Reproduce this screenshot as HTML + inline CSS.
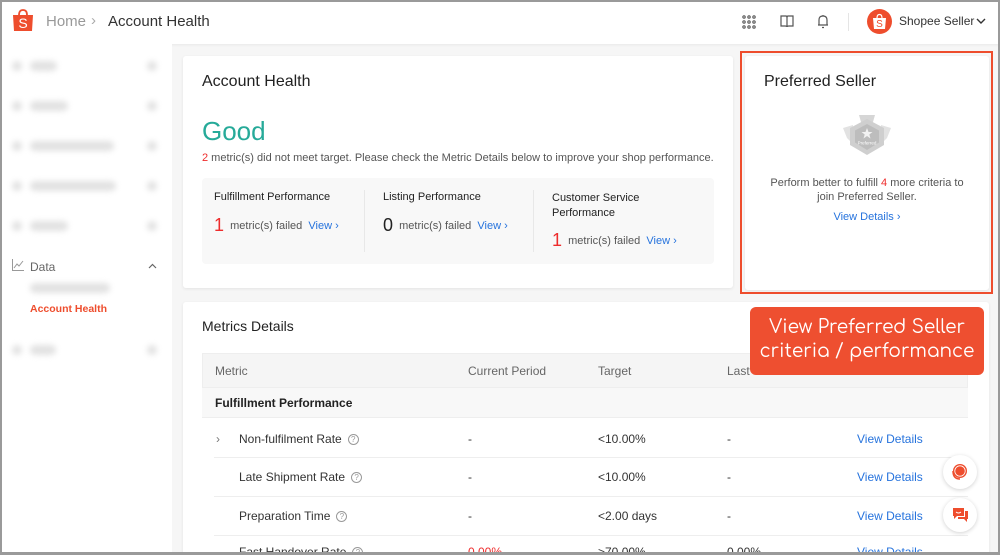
<!DOCTYPE html>
<html><head><meta charset="utf-8">
<style>
*{box-sizing:border-box;margin:0;padding:0}
html,body{width:1000px;height:555px;overflow:hidden}
body{font-family:"Liberation Sans",Arial,sans-serif;background:#f6f6f6;position:relative;color:#333}
.abs{position:absolute}
.frame{position:absolute;left:0;top:0;width:1000px;height:555px;border:2px solid #9a9a9a;border-bottom-width:3px;pointer-events:none;z-index:50}
.hdr{left:0;top:0;width:1000px;height:44px;background:#fff;box-shadow:0 1px 3px rgba(0,0,0,.06)}
.side{left:0;top:44px;width:172px;height:511px;background:#fff}
.blur{position:absolute;height:10px;background:#e2e2e2;border-radius:5px;filter:blur(3px)}
.card{position:absolute;background:#fff;border-radius:3px;box-shadow:0 1px 3px rgba(0,0,0,.08)}
.blue{color:#2673dd}
.red{color:#ee2c2c}
.row{position:absolute;left:202px;width:766px;font-size:12px;color:#333}
.q{display:inline-block;width:11px;height:11px;border:1px solid #999;border-radius:50%;font-size:8px;line-height:9px;text-align:center;color:#999;vertical-align:middle;margin-left:6px}
</style></head><body>
<div class="frame"></div>
<div class="abs hdr">
  <svg class="abs" style="left:12px;top:8px" width="22" height="24" viewBox="0 0 22 24"><path d="M7 7 Q7 2 11 2 Q15 2 15 7" fill="none" stroke="#ee4d2d" stroke-width="1.8"/><path d="M1 7 H21 L20 23 H2 Z" fill="#ee4d2d"/><text x="11" y="20" font-size="14" fill="#fff" text-anchor="middle" font-family="Liberation Sans">S</text></svg>
  <div class="abs" style="left:46px;top:13px;font-size:15px;color:#999">Home</div>
  <div class="abs" style="left:91px;top:12px;font-size:15px;color:#aaa">›</div>
  <div class="abs" style="left:108px;top:13px;font-size:15px;color:#333">Account Health</div>
  <svg class="abs" style="left:742px;top:15px" width="14" height="14" viewBox="0 0 14 14" fill="none" stroke="#555" stroke-width="1.1"><circle cx="2" cy="2" r="1.2"/><circle cx="7" cy="2" r="1.2"/><circle cx="12" cy="2" r="1.2"/><circle cx="2" cy="7" r="1.2"/><circle cx="7" cy="7" r="1.2"/><circle cx="12" cy="7" r="1.2"/><circle cx="2" cy="12" r="1.2"/><circle cx="7" cy="12" r="1.2"/><circle cx="12" cy="12" r="1.2"/></svg>
  <svg class="abs" style="left:780px;top:15px" width="14" height="13" viewBox="0 0 14 13" fill="none" stroke="#555" stroke-width="1.2"><path d="M1 1 H6 Q7 1 7 3 V12 Q7 11 5 11 H1 Z M13 1 H8 Q7 1 7 3 V12 Q7 11 9 11 H13 Z"/></svg>
  <svg class="abs" style="left:817px;top:14px" width="12" height="15" viewBox="0 0 12 15" fill="none" stroke="#555" stroke-width="1.2"><path d="M2 11 V6 Q2 2 6 2 Q10 2 10 6 V11 H1 H11 M5 13.5 H7 M6 1 V2"/></svg>
  <div class="abs" style="left:848px;top:13px;width:1px;height:18px;background:#e5e5e5"></div>
  <div class="abs" style="left:867px;top:9px;width:25px;height:25px;border-radius:50%;background:#ee4d2d"></div>
  <svg class="abs" style="left:872px;top:13px" width="15" height="17" viewBox="0 0 15 17"><path d="M5 5 Q5 1.5 7.5 1.5 Q10 1.5 10 5" fill="none" stroke="#fff" stroke-width="1.2"/><path d="M1 5 H14 L13 16 H2 Z" fill="#fff"/><text x="7.5" y="14" font-size="10" fill="#ee4d2d" text-anchor="middle" font-family="Liberation Sans">S</text></svg>
  <div class="abs" style="left:899px;top:14px;font-size:12px;color:#333">Shopee Seller</div>
  <svg class="abs" style="left:976px;top:18px" width="10" height="7" viewBox="0 0 10 7" fill="none" stroke="#333" stroke-width="1.4"><path d="M1 1 L5 5 L9 1"/></svg>
</div>
<div class="abs side">
  <div class="blur" style="left:12px;top:17px;width:10px"></div><div class="blur" style="left:30px;top:17px;width:27px"></div><div class="blur" style="left:147px;top:17px;width:10px"></div>
  <div class="blur" style="left:12px;top:57px;width:10px"></div><div class="blur" style="left:30px;top:57px;width:38px"></div><div class="blur" style="left:147px;top:57px;width:10px"></div>
  <div class="blur" style="left:12px;top:97px;width:10px"></div><div class="blur" style="left:30px;top:97px;width:84px"></div><div class="blur" style="left:147px;top:97px;width:10px"></div>
  <div class="blur" style="left:12px;top:137px;width:10px"></div><div class="blur" style="left:30px;top:137px;width:86px"></div><div class="blur" style="left:147px;top:137px;width:10px"></div>
  <div class="blur" style="left:12px;top:177px;width:10px"></div><div class="blur" style="left:30px;top:177px;width:38px"></div><div class="blur" style="left:147px;top:177px;width:10px"></div>
  <svg class="abs" style="left:12px;top:215px" width="12" height="12" viewBox="0 0 12 12" fill="none" stroke="#999" stroke-width="1"><path d="M0.5 0 V11.5 H12 M2 9 L5 5 L7 7 L11 2"/></svg>
  <div class="abs" style="left:30px;top:216px;font-size:12px;color:#666">Data</div>
  <svg class="abs" style="left:148px;top:219px" width="9" height="6" viewBox="0 0 9 6" fill="none" stroke="#666" stroke-width="1.2"><path d="M1 5 L4.5 1.5 L8 5"/></svg>
  <div class="blur" style="left:30px;top:239px;width:80px"></div>
  <div class="abs" style="left:30px;top:259px;font-size:10.5px;font-weight:bold;color:#ee4d2d">Account Health</div>
  <div class="blur" style="left:12px;top:301px;width:10px"></div><div class="blur" style="left:30px;top:301px;width:26px"></div><div class="blur" style="left:147px;top:301px;width:10px"></div>
</div>

<div class="card" style="left:183px;top:56px;width:550px;height:232px">
  <div class="abs" style="left:19px;top:17px;font-size:16px;color:#222">Account Health</div>
  <div class="abs" style="left:19px;top:60px;font-size:26px;color:#26aa99">Good</div>
  <div class="abs" style="left:19px;top:96px;font-size:11px;color:#555;white-space:nowrap"><span class="red">2</span> metric(s) did not meet target. Please check the Metric Details below to improve your shop performance.</div>
  <div class="abs" style="left:19px;top:122px;width:512px;height:86px;background:#f8f8f8;border-radius:4px">
    <div class="abs" style="left:12px;top:13px;font-size:11px;color:#222">Fulfillment Performance</div>
    <div class="abs" style="left:12px;top:37px;font-size:11px;color:#555;white-space:nowrap"><span class="red" style="font-size:18px;vertical-align:-2px">1</span>&nbsp;&nbsp;metric(s) failed&nbsp;&nbsp;<span class="blue">View ›</span></div>
    <div class="abs" style="left:162px;top:12px;width:1px;height:62px;background:#e8e8e8"></div>
    <div class="abs" style="left:181px;top:13px;font-size:11px;color:#222">Listing Performance</div>
    <div class="abs" style="left:181px;top:37px;font-size:11px;color:#555;white-space:nowrap"><span style="font-size:18px;color:#222;vertical-align:-2px">0</span>&nbsp;&nbsp;metric(s) failed&nbsp;&nbsp;<span class="blue">View ›</span></div>
    <div class="abs" style="left:331px;top:12px;width:1px;height:62px;background:#e8e8e8"></div>
    <div class="abs" style="left:350px;top:13px;font-size:11px;color:#222;line-height:15px">Customer Service<br>Performance</div>
    <div class="abs" style="left:350px;top:52px;font-size:11px;color:#555;white-space:nowrap"><span class="red" style="font-size:18px;vertical-align:-2px">1</span>&nbsp;&nbsp;metric(s) failed&nbsp;&nbsp;<span class="blue">View ›</span></div>
  </div>
</div>

<div class="card" style="left:745px;top:56px;width:244px;height:234px">
  <div class="abs" style="left:19px;top:17px;font-size:16px;color:#222">Preferred Seller</div>
  <svg class="abs" style="left:96px;top:56px" width="52" height="48" viewBox="0 0 52 48"><path d="M18 3 H34 L32 10 H20 Z" fill="#d6d6d6"/><path d="M2 16 L12 13 L12 32 L6 26 Z M50 16 L40 13 L40 32 L46 26 Z" fill="#e2e2e2"/><path d="M26 7 L43 16 V33 L26 43 L9 33 V16 Z" fill="#cfcfcf"/><path d="M26 12 L38 18.5 V30.5 L26 38 L14 30.5 V18.5 Z" fill="#bdbdbd"/><path d="M26 16 L27.5 20 L31.5 20 L28.3 22.5 L29.5 26.5 L26 24 L22.5 26.5 L23.7 22.5 L20.5 20 L24.5 20 Z" fill="#f2f2f2"/><text x="26" y="32.5" font-size="4.5" fill="#fff" text-anchor="middle" font-family="Liberation Sans">Preferred</text></svg>
  <div class="abs" style="left:0;top:120px;width:244px;text-align:center;font-size:11px;color:#555;line-height:14px">Perform better to fulfill <span class="red">4</span> more criteria to<br>join Preferred Seller.</div>
  <div class="abs blue" style="left:0;top:155px;width:244px;text-align:center;font-size:11px">View Details ›</div>
</div>
<div class="abs" style="left:740px;top:51px;width:253px;height:243px;border:2px solid #ee4d2d"></div>

<div class="card" style="left:183px;top:302px;width:806px;height:253px"></div>
<div class="abs" style="left:202px;top:318px;font-size:14px;color:#222">Metrics Details</div>
<div class="abs" style="left:202px;top:353px;width:766px;height:34px;background:#f5f5f5;border:1px solid #eee;border-bottom:0"></div>
<div class="row" style="top:364px;color:#666"><span class="abs" style="left:13px">Metric</span><span class="abs" style="left:266px">Current Period</span><span class="abs" style="left:396px">Target</span><span class="abs" style="left:525px">Last</span></div>
<div class="abs" style="left:202px;top:387px;width:766px;height:31px;background:#f8f8f8;border-top:1px solid #eee;border-bottom:1px solid #eee"></div>
<div class="row" style="top:396px;font-weight:bold;color:#222"><span class="abs" style="left:13px">Fulfillment Performance</span></div>
<div class="row" style="top:432px"><span class="abs" style="left:14px;color:#777">›</span><span class="abs" style="left:37px;white-space:nowrap">Non-fulfilment Rate<span class="q">?</span></span><span class="abs" style="left:266px">-</span><span class="abs" style="left:396px">&lt;10.00%</span><span class="abs" style="left:525px">-</span><span class="abs blue" style="left:655px">View Details</span></div>
<div class="abs" style="left:214px;top:457px;width:754px;height:1px;background:#eee"></div>
<div class="row" style="top:470px"><span class="abs" style="left:37px;white-space:nowrap">Late Shipment Rate<span class="q">?</span></span><span class="abs" style="left:266px">-</span><span class="abs" style="left:396px">&lt;10.00%</span><span class="abs" style="left:525px">-</span><span class="abs blue" style="left:655px">View Details</span></div>
<div class="abs" style="left:214px;top:496px;width:754px;height:1px;background:#eee"></div>
<div class="row" style="top:509px"><span class="abs" style="left:37px;white-space:nowrap">Preparation Time<span class="q">?</span></span><span class="abs" style="left:266px">-</span><span class="abs" style="left:396px">&lt;2.00 days</span><span class="abs" style="left:525px">-</span><span class="abs blue" style="left:655px">View Details</span></div>
<div class="abs" style="left:214px;top:535px;width:754px;height:1px;background:#eee"></div>
<div class="row" style="top:545px"><span class="abs" style="left:37px;white-space:nowrap">Fast Handover Rate<span class="q">?</span></span><span class="abs red" style="left:266px">0.00%</span><span class="abs" style="left:396px">&gt;70.00%</span><span class="abs" style="left:525px">0.00%</span><span class="abs blue" style="left:655px">View Details</span></div>

<div class="abs" style="left:750px;top:307px;width:234px;height:68px;background:#ee4f30;border-radius:6px;color:#fff;font-family:'Comfortaa','Quicksand','Liberation Sans',sans-serif;font-size:18.5px;text-align:center;line-height:24px;padding-top:9px">View Preferred Seller<br>criteria / performance</div>

<div class="abs" style="left:943px;top:455px;width:34px;height:34px;border-radius:50%;background:#fff;box-shadow:0 1px 4px rgba(0,0,0,.18)"></div>
<svg class="abs" style="left:950px;top:462px" width="20" height="20" viewBox="0 0 20 20"><circle cx="10" cy="9" r="7" fill="#ee4d2d"/><path d="M3 9 Q3 17 10 17" fill="none" stroke="#ee4d2d" stroke-width="1.5"/><circle cx="10" cy="9" r="5.2" fill="none" stroke="#fff" stroke-width="0.8"/></svg>
<div class="abs" style="left:943px;top:498px;width:34px;height:34px;border-radius:50%;background:#fff;box-shadow:0 1px 4px rgba(0,0,0,.18)"></div>
<svg class="abs" style="left:952px;top:507px" width="17" height="16" viewBox="0 0 17 16"><path d="M1 1 H12 V9 H5 L2 12 V9 H1 Z" fill="#ee4d2d"/><path d="M13 4 H16 V12 H15 V15 L12 12 H6 V10 H13 Z" fill="#ee4d2d"/><path d="M4 5 Q6.5 7 9 5" stroke="#fff" fill="none" stroke-width="1"/></svg>
</body></html>
